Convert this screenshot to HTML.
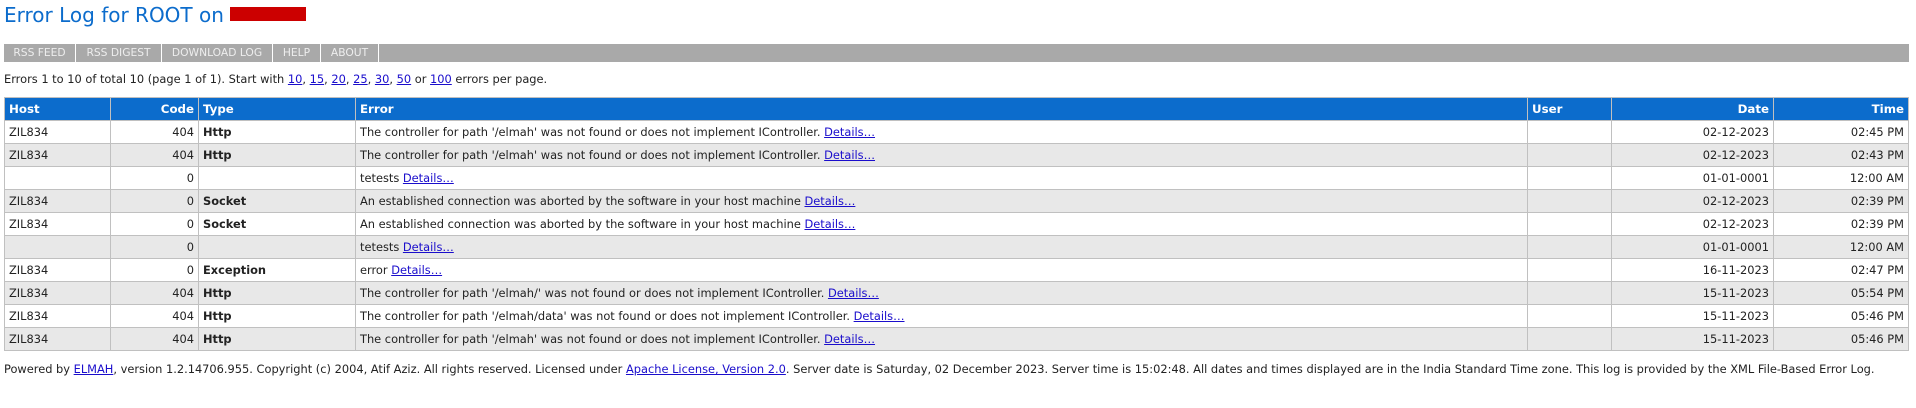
<!DOCTYPE html>
<html><head><meta charset="utf-8"><style>
body{margin:0;background:#fff;font-family:"DejaVu Sans","Liberation Sans",sans-serif;font-size:11.4px;color:#222;width:1916px;height:408px;overflow:hidden;position:relative}
a{color:#1a0dcc;text-decoration:underline}
h1{position:absolute;left:4px;top:3px;margin:0;font-weight:normal;font-size:20px;color:#0c6ccc;font-family:"DejaVu Sans",sans-serif;white-space:nowrap}
.red{display:inline-block;width:76px;height:14px;background:#cc0000;vertical-align:1px}
.menu{position:absolute;left:4px;top:44px;width:1905px;height:18px;background:#a9a9a9}
.menu span{float:left;height:18px;line-height:18px;color:#eee;font-size:10.7px;border-right:1px solid #fff;text-align:center}
.sum{position:absolute;left:4px;top:72px;white-space:nowrap;font-size:11.4px}
table{position:absolute;left:4px;top:97px;width:1904px;border-collapse:collapse;table-layout:fixed}
td,th{border:1px solid #c0c0c0;height:22px;padding:0 4px;white-space:nowrap;overflow:hidden;font-size:11.4px}
th{background:#0c6ccc;color:#fff;font-weight:bold;text-align:left;font-size:11.8px}
tr.a td{background:#e8e8e8}
.r{text-align:right}
.b{font-weight:bold}
.foot{position:absolute;left:4px;top:362px;white-space:nowrap;font-size:11.4px}
</style></head><body>
<h1>Error Log for ROOT on <span class="red"></span></h1>
<div class="menu"><span style="width:71px">RSS FEED</span><span style="width:85px">RSS DIGEST</span><span style="width:110px">DOWNLOAD LOG</span><span style="width:47px">HELP</span><span style="width:57px">ABOUT</span></div>
<div class="sum">Errors 1 to 10 of total 10 (page 1 of 1). Start with <a>10</a>, <a>15</a>, <a>20</a>, <a>25</a>, <a>30</a>, <a>50</a> or <a>100</a> errors per page.</div>
<table>
<colgroup><col style="width:106px"><col style="width:88px"><col style="width:157px"><col style="width:1172px"><col style="width:84px"><col style="width:162px"><col style="width:135px"></colgroup>
<tr><th>Host</th><th class="r">Code</th><th>Type</th><th>Error</th><th>User</th><th class="r">Date</th><th class="r">Time</th></tr>
<tr><td>ZIL834</td><td class="r">404</td><td class="b">Http</td><td>The controller for path '/elmah' was not found or does not implement IController. <a>Details…</a></td><td></td><td class="r">02-12-2023</td><td class="r">02:45 PM</td></tr>
<tr class="a"><td>ZIL834</td><td class="r">404</td><td class="b">Http</td><td>The controller for path '/elmah' was not found or does not implement IController. <a>Details…</a></td><td></td><td class="r">02-12-2023</td><td class="r">02:43 PM</td></tr>
<tr><td></td><td class="r">0</td><td class="b"></td><td>tetests <a>Details…</a></td><td></td><td class="r">01-01-0001</td><td class="r">12:00 AM</td></tr>
<tr class="a"><td>ZIL834</td><td class="r">0</td><td class="b">Socket</td><td>An established connection was aborted by the software in your host machine <a>Details…</a></td><td></td><td class="r">02-12-2023</td><td class="r">02:39 PM</td></tr>
<tr><td>ZIL834</td><td class="r">0</td><td class="b">Socket</td><td>An established connection was aborted by the software in your host machine <a>Details…</a></td><td></td><td class="r">02-12-2023</td><td class="r">02:39 PM</td></tr>
<tr class="a"><td></td><td class="r">0</td><td class="b"></td><td>tetests <a>Details…</a></td><td></td><td class="r">01-01-0001</td><td class="r">12:00 AM</td></tr>
<tr><td>ZIL834</td><td class="r">0</td><td class="b">Exception</td><td>error <a>Details…</a></td><td></td><td class="r">16-11-2023</td><td class="r">02:47 PM</td></tr>
<tr class="a"><td>ZIL834</td><td class="r">404</td><td class="b">Http</td><td>The controller for path '/elmah/' was not found or does not implement IController. <a>Details…</a></td><td></td><td class="r">15-11-2023</td><td class="r">05:54 PM</td></tr>
<tr><td>ZIL834</td><td class="r">404</td><td class="b">Http</td><td>The controller for path '/elmah/data' was not found or does not implement IController. <a>Details…</a></td><td></td><td class="r">15-11-2023</td><td class="r">05:46 PM</td></tr>
<tr class="a"><td>ZIL834</td><td class="r">404</td><td class="b">Http</td><td>The controller for path '/elmah' was not found or does not implement IController. <a>Details…</a></td><td></td><td class="r">15-11-2023</td><td class="r">05:46 PM</td></tr>
</table>
<div class="foot">Powered by <a>ELMAH</a>, version 1.2.14706.955. Copyright (c) 2004, Atif Aziz. All rights reserved. Licensed under <a>Apache License, Version 2.0</a>. Server date is Saturday, 02 December 2023. Server time is 15:02:48. All dates and times displayed are in the India Standard Time zone. This log is provided by the XML File-Based Error Log.</div>
</body></html>
